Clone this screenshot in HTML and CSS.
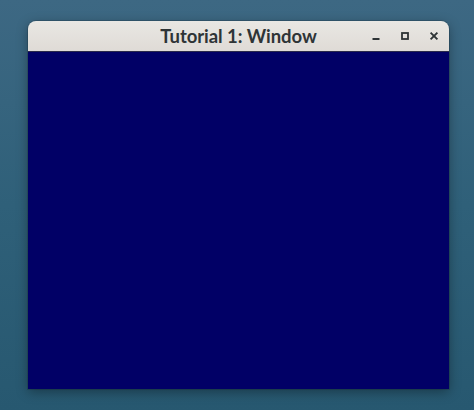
FILE: index.html
```html
<!DOCTYPE html>
<html>
<head>
<meta charset="utf-8">
<link rel="stylesheet" href="styles.css">
</head>
<body>
<div class="desktop">
  <div class="window">
    <div class="titlebar">
      <div class="title">Tutorial 1: Window</div>
      <div class="controls">
        <span class="btn"><svg width="10" height="10" viewBox="0 0 10 10"><rect x="1.5" y="7" width="7" height="2" fill="#2e3436"/></svg></span>
        <span class="btn"><svg width="10" height="10" viewBox="0 0 10 10"><rect x="2" y="2" width="6" height="6" fill="none" stroke="#2e3436" stroke-width="1.8"/></svg></span>
        <span class="btn"><svg width="10" height="10" viewBox="0 0 10 10"><path d="M1.6 1.6 L8.4 8.4 M8.4 1.6 L1.6 8.4" stroke="#2e3436" stroke-width="1.9"/></svg></span>
      </div>
    </div>
    <div class="content"></div>
  </div>
</div>
</body>
</html>
```
FILE: styles.css
```css
html, body {
  margin: 0;
  padding: 0;
  width: 474px;
  height: 410px;
  overflow: hidden;
}
.desktop {
  width: 474px;
  height: 410px;
  background: linear-gradient(180deg, #3d6883 0%, #2f6079 50%, #275870 100%);
  padding: 21px 0 0 28px;
  box-sizing: border-box;
}
.window {
  width: 421px;
  border-radius: 8px 8px 0 0;
  box-shadow: 0 3px 12px rgba(0, 0, 0, 0.35), 0 0 0 1px rgba(0, 0, 0, 0.12);
  overflow: hidden;
}
.titlebar {
  position: relative;
  height: 30px;
  background: linear-gradient(180deg, #e9e7e3 0%, #dfdbd6 100%);
  border-bottom: 1px solid #2a2a4a;
  display: flex;
  align-items: center;
  justify-content: center;
}
.title {
  font-family: "Lato", "Open Sans", sans-serif;
  font-weight: bold;
  font-size: 18.5px;
  color: #2e3436;
  letter-spacing: -0.05px;
}
.controls {
  position: absolute;
  right: 5px;
  top: 0;
  height: 30px;
  display: flex;
  align-items: center;
  gap: 9px;
}
.btn {
  width: 20px;
  height: 20px;
  display: flex;
  align-items: center;
  justify-content: center;
}
.content {
  height: 337px;
  background: #010066;
}
```
